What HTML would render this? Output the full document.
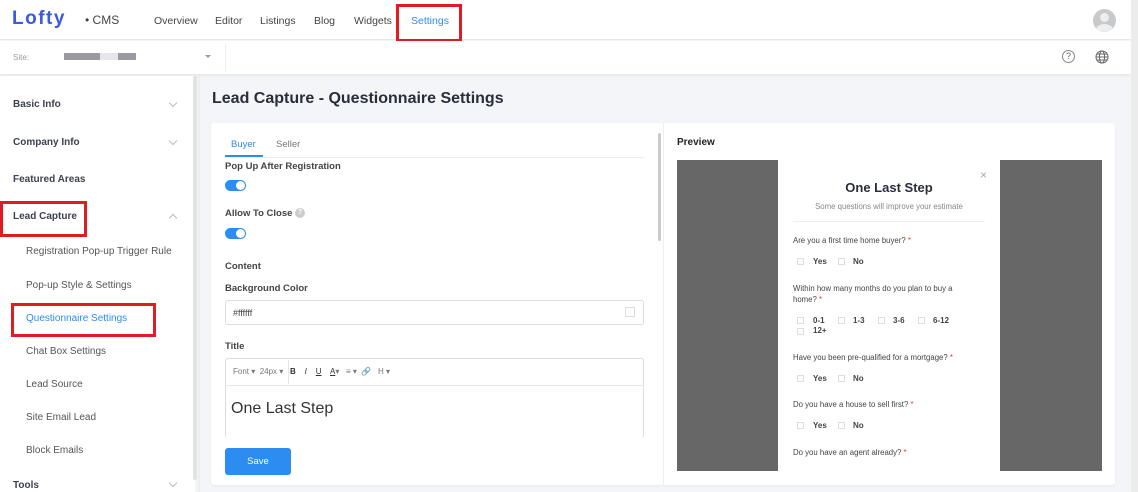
<!DOCTYPE html>
<html><head><meta charset="utf-8"><style>
*{margin:0;padding:0;box-sizing:border-box}
body{width:1138px;height:492px;overflow:hidden;background:#f4f5f8;font-family:"Liberation Sans",sans-serif;position:relative;color:#333}
.a{position:absolute}
.nav{font-size:10.5px;color:#444;top:15px}
.red{position:absolute;border:3px solid #e11b22}
.side{font-size:10px;color:#3d4150;font-weight:bold;left:13px}
.sub{font-size:10px;color:#555;left:26px}
.chev{position:absolute;left:170px;width:6px;height:6px;border-right:1px solid #bbb;border-bottom:1px solid #bbb;transform:rotate(45deg)}
.lbl{font-size:9.5px;font-weight:bold;color:#444;left:225px}
.tog{position:absolute;left:225px;width:21px;height:11px;border-radius:6px;background:#2d8cf0}
.tog:after{content:"";position:absolute;right:1px;top:1px;width:9px;height:9px;border-radius:50%;background:#fff}
.q{font-size:7.8px;color:#444;left:793px}
.q i{color:#e33;font-style:normal}
.opt{font-size:8px;font-weight:bold;color:#444}
.cb{position:absolute;width:7px;height:7px;border:1px solid #ddd}
</style></head><body>
<div class="a" style="left:0;top:0;width:1131px;height:40px;background:#fff;border-bottom:1px solid #e8e8e8"></div>
<div class="a" style="left:12px;top:8px;font-size:19px;font-weight:bold;color:#3a5bdc;letter-spacing:1.5px">Lofty</div>
<div class="a" style="left:85px;top:13px;font-size:12px;color:#444">• CMS</div>
<div class="a nav" style="left:154px">Overview</div>
<div class="a nav" style="left:215px">Editor</div>
<div class="a nav" style="left:260px">Listings</div>
<div class="a nav" style="left:314px">Blog</div>
<div class="a nav" style="left:354px">Widgets</div>
<div class="a nav" style="left:411px;color:#2d8cf0">Settings</div>
<div class="red" style="left:396px;top:4px;width:66px;height:38px"></div>
<div class="a" style="left:1093px;top:9px;width:23px;height:23px;border-radius:50%;background:#c8c9cd;overflow:hidden"><div class="a" style="left:7px;top:4px;width:9px;height:9px;border-radius:50%;background:#eee"></div><div class="a" style="left:3px;top:15px;width:17px;height:12px;border-radius:50%;background:#eee"></div></div>
<div class="a" style="left:0;top:41px;width:1131px;height:33px;background:#fff;box-shadow:0 2px 3px rgba(0,0,0,0.06)"></div>
<div class="a" style="left:13px;top:53px;font-size:8px;color:#999">Site:</div>
<div class="a" style="left:64px;top:53px;width:36px;height:7px;background:#9a9aa0"></div>
<div class="a" style="left:100px;top:53px;width:18px;height:7px;background:#e6e6e8"></div>
<div class="a" style="left:118px;top:53px;width:18px;height:7px;background:#9a9aa0"></div>
<div class="a" style="left:205px;top:55px;border:3px solid transparent;border-top:3px solid #999"></div>
<div class="a" style="left:225px;top:44px;width:1px;height:28px;background:#eee"></div>
<div class="a" style="left:1062px;top:50px;width:13px;height:13px;border:1px solid #888;border-radius:50%;font-size:9px;text-align:center;line-height:11px;color:#666">?</div>
<svg class="a" style="left:1095px;top:50px" width="14" height="14" viewBox="0 0 14 14" fill="none" stroke="#666" stroke-width="1"><circle cx="7" cy="7" r="6"/><ellipse cx="7" cy="7" rx="2.6" ry="6"/><path d="M1 7h12M2 4h10M2 10h10"/></svg>
<div class="a" style="left:0;top:76px;width:195px;height:416px;background:#fff"></div>
<div class="a" style="left:193px;top:76px;width:4px;height:404px;background:#e2e2e2;border-radius:2px"></div>
<div class="a" style="left:198px;top:76px;width:2px;height:416px;background:#eee"></div>
<div class="a side" style="top:99px">Basic Info</div><div class="chev" style="top:100px"></div>
<div class="a side" style="top:137px">Company Info</div><div class="chev" style="top:138px"></div>
<div class="a side" style="top:174px">Featured Areas</div>
<div class="a side" style="top:211px">Lead Capture</div><div class="chev" style="top:215px;transform:rotate(225deg)"></div>
<div class="red" style="left:0;top:201px;width:87px;height:36px"></div>
<div class="a sub" style="top:246px">Registration Pop-up Trigger Rule</div>
<div class="a sub" style="top:280px">Pop-up Style &amp; Settings</div>
<div class="a sub" style="top:313px;color:#2d8cf0">Questionnaire Settings</div>
<div class="red" style="left:11px;top:303px;width:145px;height:34px"></div>
<div class="a sub" style="top:346px">Chat Box Settings</div>
<div class="a sub" style="top:379px">Lead Source</div>
<div class="a sub" style="top:412px">Site Email Lead</div>
<div class="a sub" style="top:445px">Block Emails</div>
<div class="a side" style="top:480px">Tools</div><div class="chev" style="top:480px"></div>
<div class="a" style="left:1131px;top:0;width:7px;height:492px;background:#ececec"></div>
<div class="a" style="left:212px;top:90px;font-size:16px;font-weight:bold;color:#2a2d3a">Lead Capture - Questionnaire Settings</div>
<div class="a" style="left:211px;top:123px;width:904px;height:362px;background:#fff;border-radius:3px;box-shadow:0 1px 2px rgba(0,0,0,0.05)"></div>
<div class="a" style="left:663px;top:123px;width:1px;height:362px;background:#eee"></div>
<div class="a" style="left:658px;top:133px;width:3px;height:108px;background:#ccc;border-radius:2px"></div>
<div class="a" style="left:231px;top:139px;font-size:9.5px;color:#2d8cf0">Buyer</div>
<div class="a" style="left:276px;top:139px;font-size:9.5px;color:#777">Seller</div>
<div class="a" style="left:225px;top:157px;width:419px;height:1px;background:#eee"></div>
<div class="a" style="left:225px;top:155px;width:38px;height:2px;background:#2d8cf0"></div>
<div class="a lbl" style="top:161px">Pop Up After Registration</div>
<div class="tog" style="top:180px"></div>
<div class="a lbl" style="top:208px">Allow To Close <span style="display:inline-block;width:10px;height:10px;border-radius:50%;background:#ccc;color:#fff;font-size:7px;text-align:center;line-height:10px;vertical-align:middle">?</span></div>
<div class="tog" style="top:228px"></div>
<div class="a lbl" style="top:261px">Content</div>
<div class="a lbl" style="top:283px">Background Color</div>
<div class="a" style="left:225px;top:300px;width:419px;height:25px;border:1px solid #ddd;border-radius:3px"></div>
<div class="a" style="left:233px;top:308px;font-size:9px;color:#444">#ffffff</div>
<div class="a" style="left:625px;top:307px;width:10px;height:10px;border:1px solid #ddd"></div>
<div class="a lbl" style="top:341px">Title</div>
<div class="a" style="left:225px;top:358px;width:419px;height:80px;border:1px solid #ddd;border-radius:3px;border-bottom:none"></div>
<div class="a" style="left:225px;top:385px;width:419px;height:1px;background:#e6e6e6"></div>
<div class="a" style="left:288px;top:360px;width:1px;height:24px;background:#e6e6e6"></div>
<div class="a" style="left:233px;top:367px;font-size:8px;color:#777;white-space:pre">Font ▾  24px ▾   <b style="color:#333">B</b>    <i style="color:#333">I</i>    <u style="color:#333">U</u>    <u style="color:#333">A</u>▾   ≡ ▾  🔗   H ▾</div>
<div class="a" style="left:231px;top:400px;font-size:16px;color:#333">One Last Step</div>
<div class="a" style="left:225px;top:448px;width:66px;height:27px;background:#2d8cf0;border-radius:3px;color:#fff;font-size:9.5px;text-align:center;line-height:27px">Save</div>
<div class="a" style="left:677px;top:137px;font-size:10px;font-weight:bold;color:#222">Preview</div>
<div class="a" style="left:677px;top:160px;width:425px;height:311px;background:#676767"></div>
<div class="a" style="left:778px;top:160px;width:222px;height:311px;background:#fff"></div>
<div class="a" style="left:980px;top:168px;font-size:12px;color:#aaa">×</div>
<div class="a" style="left:778px;top:180px;width:222px;text-align:center;font-size:13px;font-weight:bold;color:#2a2d3a">One Last Step</div>
<div class="a" style="left:778px;top:202px;width:222px;text-align:center;font-size:7.8px;color:#888">Some questions will improve your estimate</div>
<div class="a" style="left:793px;top:221px;width:192px;height:1px;background:#eee"></div>
<div class="a q" style="top:236px">Are you a first time home buyer? <i>*</i></div>
<div class="cb" style="left:797px;top:258px"></div><div class="a opt" style="left:813px;top:257px">Yes</div>
<div class="cb" style="left:838px;top:258px"></div><div class="a opt" style="left:853px;top:257px">No</div>
<div class="a q" style="top:283px;width:180px;line-height:11px">Within how many months do you plan to buy a home? <i>*</i></div>
<div class="cb" style="left:797px;top:317px"></div><div class="a opt" style="left:813px;top:316px">0-1</div>
<div class="cb" style="left:838px;top:317px"></div><div class="a opt" style="left:853px;top:316px">1-3</div>
<div class="cb" style="left:878px;top:317px"></div><div class="a opt" style="left:893px;top:316px">3-6</div>
<div class="cb" style="left:918px;top:317px"></div><div class="a opt" style="left:933px;top:316px">6-12</div>
<div class="cb" style="left:797px;top:328px"></div><div class="a opt" style="left:813px;top:326px">12+</div>
<div class="a q" style="top:353px">Have you been pre-qualified for a mortgage? <i>*</i></div>
<div class="cb" style="left:797px;top:375px"></div><div class="a opt" style="left:813px;top:374px">Yes</div>
<div class="cb" style="left:838px;top:375px"></div><div class="a opt" style="left:853px;top:374px">No</div>
<div class="a q" style="top:400px">Do you have a house to sell first? <i>*</i></div>
<div class="cb" style="left:797px;top:422px"></div><div class="a opt" style="left:813px;top:421px">Yes</div>
<div class="cb" style="left:838px;top:422px"></div><div class="a opt" style="left:853px;top:421px">No</div>
<div class="a q" style="top:448px">Do you have an agent already? <i>*</i></div>
</body></html>
